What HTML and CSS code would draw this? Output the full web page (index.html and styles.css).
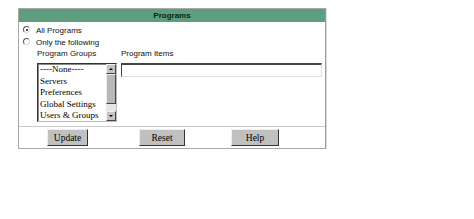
FILE: index.html
```html
<!DOCTYPE html>
<html lang="en">
<head>
    <meta charset="UTF-8">
    <title>Programs</title>
    <link rel="stylesheet" href="styles.css">
</head>
<body>
    <div class="panel">
        <div class="head">Programs</div>

        <div class="choices">
            <label class="opt"><span class="radio on"></span>All Programs</label>
            <label class="opt"><span class="radio"></span>Only the following</label>
        </div>

        <div class="pickers">
            <div class="col">
                <div class="cap">Program Groups</div>
                <div class="listbox">
                    <ul class="rows">
                        <li>----None----</li>
                        <li>Servers</li>
                        <li>Preferences</li>
                        <li>Global Settings</li>
                        <li>Users &amp; Groups</li>
                    </ul>
                    <div class="scroll">
                        <span class="arrow up"></span>
                        <span class="thumb"></span>
                        <span class="track"></span>
                        <span class="arrow down"></span>
                    </div>
                </div>
            </div>
            <div class="col wide">
                <div class="cap">Program Items</div>
                <div class="field"></div>
            </div>
        </div>

        <div class="actions">
            <div class="cell"><button class="Btn">Update</button></div>
            <div class="cell"><button class="Btn">Reset</button></div>
            <div class="cell"><button class="Btn">Help</button></div>
        </div>
    </div>
</body>
</html>
```

FILE: styles.css
```css
body {
    margin: 0;
    background: white;
    font-family: "Liberation Sans", Arial, sans-serif;
    font-size: 8px;
    color: #111;
}
.panel {
    margin: 8px 0 0 18px;
    width: 306px;
    border: 1px solid #a8a8a8;
    border-right-color: #9a9a9a;
    box-shadow: 1px 0 0 #dcdcdc;
}
.head {
    height: 13px;
    line-height: 13px;
    background: #5e9d7d;
    color: #082808;
    font-weight: bold;
    text-align: center;
}
.choices {
    padding-top: 2px;
}
.opt {
    display: flex;
    align-items: center;
    height: 12px;
    padding-left: 4px;
}
.radio {
    width: 5px;
    height: 5px;
    border: 1px solid #555;
    border-right-color: #d8d8d8;
    border-bottom-color: #d8d8d8;
    border-radius: 50%;
    margin: -1px 6px 0 0;
    display: flex;
    align-items: center;
    justify-content: center;
}
.radio.on::after {
    content: '';
    width: 2px;
    height: 2px;
    border-radius: 50%;
    background: #111;
}

/* Groups + items */
.pickers {
    display: flex;
    padding: 0 0 4px 18px;
}
.col {
    width: 80px;
}
.col.wide {
    width: 201px;
    margin-left: 4px;
}
.cap {
    height: 12px;
    line-height: 12px;
    margin-bottom: 3px;
}
.listbox {
    display: flex;
    height: 57px;
    border: 1px solid #333;
    border-right-color: #bbb;
    border-bottom-color: #bbb;
    box-shadow: inset 1px 1px 0 #888;
}
.rows {
    flex: 1;
    list-style: none;
    margin: 0;
    padding: 0 0 0 2px;
    font-family: "Liberation Serif", "Times New Roman", serif;
    font-size: 9px;
    line-height: 11.5px;
    color: #000;
    overflow: hidden;
    white-space: nowrap;
}
.scroll {
    width: 10px;
    display: flex;
    flex-direction: column;
    background: #e6e6e6;
}
.arrow {
    height: 8px;
    background: #c4c4c4;
    border: 1px solid #f2f2f2;
    border-right-color: #444;
    border-bottom-color: #444;
    display: flex;
    align-items: center;
    justify-content: center;
}
.arrow::after {
    content: '';
    border-left: 2px solid transparent;
    border-right: 2px solid transparent;
}
.arrow.up::after {
    border-bottom: 2px solid #000;
}
.arrow.down::after {
    border-top: 2px solid #000;
}
.thumb {
    height: 28px;
    background: #b8b8b8;
    border: 1px solid #eee;
    border-right-color: #444;
    border-bottom-color: #444;
}
.track {
    flex: 1;
}
.field {
    height: 11px;
    border: 1px solid #444;
    border-top-width: 2px;
    border-right-color: #ddd;
    border-bottom-color: #ddd;
}

/* Buttons */
.actions {
    display: grid;
    grid-template-columns: 92px 92px 92px;
    padding: 2px 0 2px 28px;
    border-top: 1px solid #c8c8c8;
}
.Btn {
    height: 17px;
    padding: 0 5px;
    background: #c0c0c0;
    border: 1px solid #eeeeee;
    border-right-color: #333;
    border-bottom-color: #333;
    font-family: "Liberation Serif", "Times New Roman", serif;
    font-size: 9.5px;
    color: #000;
}
.cell:first-child .Btn {
    width: 41px;
}
.cell:nth-child(2) .Btn {
    width: 46px;
}
.cell:nth-child(3) .Btn {
    width: 48px;
}
```
